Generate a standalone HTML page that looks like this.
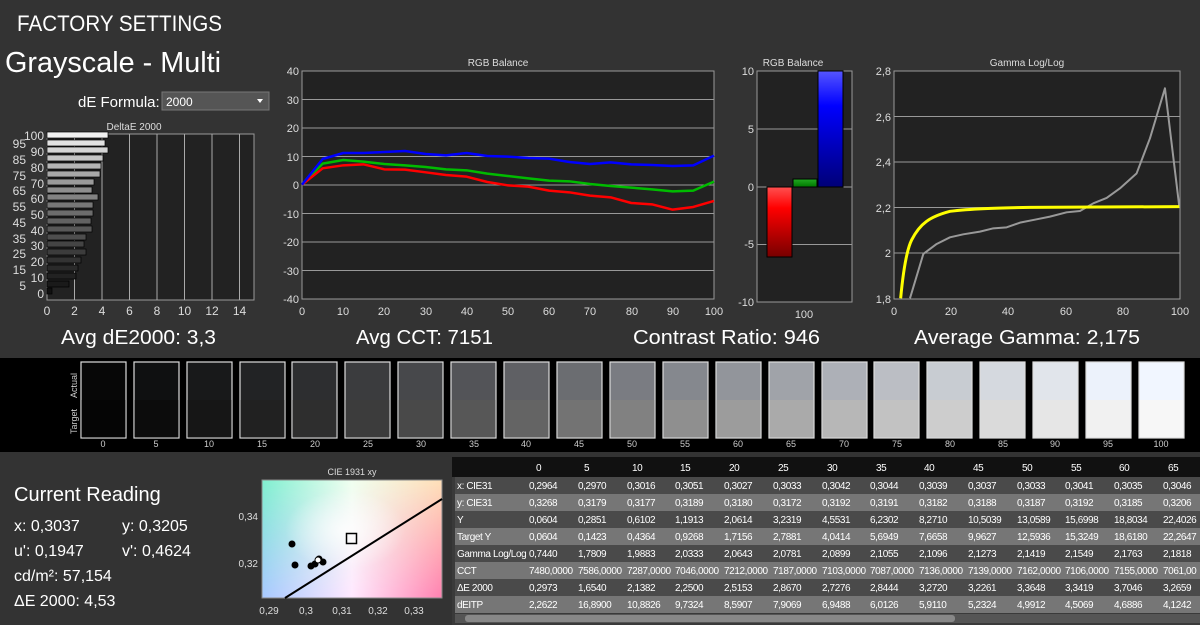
<!DOCTYPE html>
<html><head><meta charset="utf-8"><style>
html,body{margin:0;padding:0;background:#333;}
svg{display:block;font-family:"Liberation Sans",sans-serif;}
</style></head><body>
<svg width="1200" height="625" viewBox="0 0 1200 625" xmlns="http://www.w3.org/2000/svg">
<defs>
<linearGradient id="bar" x1="0" y1="0" x2="0" y2="1"><stop offset="0" stop-color="#fff" stop-opacity=".35"/><stop offset="1" stop-color="#000" stop-opacity=".35"/></linearGradient>
<linearGradient id="rb" x1="0" y1="0" x2="0" y2="1"><stop offset="0" stop-color="#ff5050"/><stop offset=".3" stop-color="#f00"/><stop offset="1" stop-color="#700"/></linearGradient>
<linearGradient id="gb" x1="0" y1="0" x2="0" y2="1"><stop offset="0" stop-color="#2a2"/><stop offset="1" stop-color="#070"/></linearGradient>
<linearGradient id="bb" x1="0" y1="0" x2="0" y2="1"><stop offset="0" stop-color="#55f"/><stop offset=".3" stop-color="#00f"/><stop offset="1" stop-color="#007"/></linearGradient>
<linearGradient id="cieH" x1="0" y1="0" x2="1" y2="0"><stop offset="0" stop-color="#80f0d0"/><stop offset=".5" stop-color="#f0fff0"/><stop offset="1" stop-color="#ffe0b8"/></linearGradient>
<linearGradient id="cieB" x1="0" y1="0" x2="1" y2="0"><stop offset="0" stop-color="#a8c8ff"/><stop offset=".5" stop-color="#ffe8ff"/><stop offset="1" stop-color="#ff80b0"/></linearGradient>
<linearGradient id="cieV" x1="0" y1="0" x2="0" y2="1"><stop offset="0" stop-color="#fff" stop-opacity="0"/><stop offset="1" stop-color="#fff" stop-opacity="1"/></linearGradient>
<mask id="mv"><rect x="262" y="480" width="180" height="118" fill="url(#cieV)"/></mask>
<radialGradient id="cw" cx=".5" cy=".5" r=".5"><stop offset="0" stop-color="#fff" stop-opacity=".8"/><stop offset="1" stop-color="#fff" stop-opacity="0"/></radialGradient>
</defs>
<rect width="1200" height="625" fill="#333"/>

<!-- Titles -->
<text x="17" y="31" font-size="22" fill="#fff" textLength="205" lengthAdjust="spacingAndGlyphs">FACTORY SETTINGS</text>
<text x="5" y="72" font-size="29" fill="#fff" textLength="216" lengthAdjust="spacingAndGlyphs">Grayscale - Multi</text>
<text x="78" y="107" font-size="15" fill="#fff">dE Formula:</text>
<rect x="162" y="92" width="107" height="18" fill="#555" stroke="#777"/>
<text x="166" y="106" font-size="12" fill="#fff">2000</text>
<polygon points="257,99 263,99 260,103" fill="#fff"/>

<!-- DeltaE chart -->
<text x="134" y="130" font-size="10" fill="#ddd" text-anchor="middle">DeltaE 2000</text>
<rect x="47" y="134" width="207" height="166" fill="#222" stroke="#999"/>
<g stroke="#aaa" stroke-width="1">
<line x1="74.5" y1="134" x2="74.5" y2="300"/><line x1="102" y1="134" x2="102" y2="300"/><line x1="129.5" y1="134" x2="129.5" y2="300"/><line x1="157" y1="134" x2="157" y2="300"/><line x1="184.5" y1="134" x2="184.5" y2="300"/><line x1="212" y1="134" x2="212" y2="300"/><line x1="239.5" y1="134" x2="239.5" y2="300"/>
</g>
<g stroke="#000" stroke-width=".7">
<rect x="47" y="288" width="5" height="6" fill="#111"/>
<rect x="47" y="281" width="22" height="6" fill="#1a1a1a"/>
<rect x="47" y="273" width="29" height="6" fill="#222"/>
<rect x="47" y="265" width="31" height="6" fill="#2a2a2a"/>
<rect x="47" y="257" width="34" height="6" fill="#333"/>
<rect x="47" y="249" width="39" height="6" fill="#3c3c3c"/>
<rect x="47" y="241" width="37" height="6" fill="#444"/>
<rect x="47" y="234" width="39" height="6" fill="#4e4e4e"/>
<rect x="47" y="226" width="45" height="6" fill="#585858"/>
<rect x="47" y="218" width="44" height="6" fill="#626262"/>
<rect x="47" y="210" width="46" height="6" fill="#6c6c6c"/>
<rect x="47" y="202" width="46" height="6" fill="#777"/>
<rect x="47" y="194" width="51" height="6" fill="#828282"/>
<rect x="47" y="187" width="45" height="6" fill="#8e8e8e"/>
<rect x="47" y="179" width="47" height="6" fill="#9a9a9a"/>
<rect x="47" y="171" width="53" height="6" fill="#a8a8a8"/>
<rect x="47" y="163" width="54" height="6" fill="#b6b6b6"/>
<rect x="47" y="155" width="56" height="6" fill="#c4c4c4"/>
<rect x="47" y="147" width="61" height="6" fill="#d4d4d4"/>
<rect x="47" y="140" width="58" height="6" fill="#e2e2e2"/>
<rect x="47" y="132" width="61" height="6" fill="#f0f0f0"/>
</g>
<g font-size="12" fill="#ddd">
<text x="44" y="140" text-anchor="end">100</text><text x="26" y="148" text-anchor="end">95</text>
<text x="44" y="156" text-anchor="end">90</text><text x="26" y="164" text-anchor="end">85</text>
<text x="44" y="172" text-anchor="end">80</text><text x="26" y="180" text-anchor="end">75</text>
<text x="44" y="188" text-anchor="end">70</text><text x="26" y="195" text-anchor="end">65</text>
<text x="44" y="203" text-anchor="end">60</text><text x="26" y="211" text-anchor="end">55</text>
<text x="44" y="219" text-anchor="end">50</text><text x="26" y="227" text-anchor="end">45</text>
<text x="44" y="235" text-anchor="end">40</text><text x="26" y="243" text-anchor="end">35</text>
<text x="44" y="250" text-anchor="end">30</text><text x="26" y="258" text-anchor="end">25</text>
<text x="44" y="266" text-anchor="end">20</text><text x="26" y="274" text-anchor="end">15</text>
<text x="44" y="282" text-anchor="end">10</text><text x="26" y="290" text-anchor="end">5</text>
<text x="44" y="298" text-anchor="end">0</text>
</g>
<g font-size="12" fill="#ddd" text-anchor="middle">
<text x="47" y="315">0</text><text x="74.5" y="315">2</text><text x="102" y="315">4</text><text x="129.5" y="315">6</text><text x="157" y="315">8</text><text x="184.5" y="315">10</text><text x="212" y="315">12</text><text x="239.5" y="315">14</text>
</g>

<!-- RGB Balance lines -->
<text x="498" y="66" font-size="10" fill="#ddd" text-anchor="middle">RGB Balance</text>
<rect x="302" y="71" width="412" height="228" fill="#222" stroke="#999"/>
<g stroke="#999" stroke-width="1">
<line x1="302" y1="99.5" x2="714" y2="99.5"/><line x1="302" y1="128" x2="714" y2="128"/><line x1="302" y1="156.5" x2="714" y2="156.5"/><line x1="302" y1="185" x2="714" y2="185"/><line x1="302" y1="213.5" x2="714" y2="213.5"/><line x1="302" y1="242" x2="714" y2="242"/><line x1="302" y1="270.5" x2="714" y2="270.5"/>
</g>
<g transform="translate(290,60) scale(0.3333)" fill="none" stroke-width="7.5" stroke-linejoin="round">
<polyline stroke="#0b0" stroke="#1a9a1a" points="36,374 98,311 160,300 220,305 283,312 345,316 407,321 468,328 530,331 592,341 653,348 715,355 777,362 838,364 900,372 962,378 1024,383 1086,388 1148,394 1210,392 1272,365"/>
<polyline stroke="#f00" points="36,374 98,325 160,316 220,313 283,328 345,329 407,337 468,345 530,350 592,366 653,376 715,380 777,392 838,397 900,407 962,412 1024,429 1086,433 1148,449 1210,441 1272,423"/>
<polyline stroke="#00f" points="36,374 98,297 160,279 220,279 283,276 345,273 407,282 468,286 530,279 592,288 653,290 715,294 777,296 838,306 900,312 962,307 1024,313 1086,315 1148,318 1210,316 1272,287"/>
</g>
<g font-size="11" fill="#ddd" text-anchor="end">
<text x="299" y="75">40</text><text x="299" y="104">30</text><text x="299" y="132">20</text><text x="299" y="161">10</text><text x="299" y="189">0</text><text x="299" y="218">-10</text><text x="299" y="246">-20</text><text x="299" y="275">-30</text><text x="299" y="303">-40</text>
</g>
<g font-size="11" fill="#ddd" text-anchor="middle">
<text x="302" y="315">0</text><text x="343" y="315">10</text><text x="384" y="315">20</text><text x="426" y="315">30</text><text x="467" y="315">40</text><text x="508" y="315">50</text><text x="549" y="315">60</text><text x="590" y="315">70</text><text x="632" y="315">80</text><text x="673" y="315">90</text><text x="714" y="315">100</text>
</g>

<!-- RGB bars -->
<text x="793" y="66" font-size="10" fill="#ddd" text-anchor="middle">RGB Balance</text>
<rect x="757" y="71" width="95" height="231" fill="#222" stroke="#999"/>
<g stroke="#999"><line x1="757" y1="129" x2="852" y2="129"/><line x1="757" y1="187" x2="852" y2="187"/><line x1="757" y1="244.5" x2="852" y2="244.5"/></g>
<rect x="767" y="187" width="25" height="70" fill="url(#rb)" stroke="#000"/>
<rect x="793" y="179" width="24" height="8" fill="url(#gb)" stroke="#000"/>
<rect x="818" y="71" width="25" height="116" fill="url(#bb)" stroke="#000"/>
<g font-size="11" fill="#ddd" text-anchor="end">
<text x="754" y="75">10</text><text x="754" y="133">5</text><text x="754" y="191">0</text><text x="754" y="248">-5</text><text x="754" y="306">-10</text>
</g>
<text x="804" y="318" font-size="11" fill="#ddd" text-anchor="middle">100</text>

<!-- Gamma -->
<text x="1027" y="66" font-size="10" fill="#ddd" text-anchor="middle">Gamma Log/Log</text>
<rect x="894" y="71" width="286" height="228" fill="#222" stroke="#999"/>
<g stroke="#999"><line x1="894" y1="116.5" x2="1180" y2="116.5"/><line x1="894" y1="162" x2="1180" y2="162"/><line x1="894" y1="207.5" x2="1180" y2="207.5"/><line x1="894" y1="253" x2="1180" y2="253"/></g>
<g transform="translate(730,50) scale(0.3333)" fill="none" stroke-width="6" stroke-linejoin="round">
<polyline stroke="#999" points="540,745 580,612 620,582 660,562 700,553 750,545 790,535 830,532 870,518 920,508 960,500 1010,487 1050,483 1090,460 1130,444 1170,415 1220,370 1260,265 1305,115 1348,470"/>
<path stroke="#ff0" stroke-width="9" d="M512,745 C520,660 530,600 545,570 C570,520 600,500 660,484 C720,476 800,474 900,472 L1348,470"/>
</g>
<g font-size="11" fill="#ddd" text-anchor="end">
<text x="891" y="75">2,8</text><text x="891" y="121">2,6</text><text x="891" y="166">2,4</text><text x="891" y="212">2,2</text><text x="891" y="257">2</text><text x="891" y="303">1,8</text>
</g>
<g font-size="11" fill="#ddd" text-anchor="middle">
<text x="894" y="315">0</text><text x="951" y="315">20</text><text x="1008" y="315">40</text><text x="1066" y="315">60</text><text x="1123" y="315">80</text><text x="1180" y="315">100</text>
</g>

<!-- averages -->
<g font-size="20" fill="#fff">
<text x="61" y="344" textLength="155" lengthAdjust="spacingAndGlyphs">Avg dE2000: 3,3</text>
<text x="356" y="344" textLength="137" lengthAdjust="spacingAndGlyphs">Avg CCT: 7151</text>
<text x="633" y="344" textLength="187" lengthAdjust="spacingAndGlyphs">Contrast Ratio: 946</text>
<text x="914" y="344" textLength="226" lengthAdjust="spacingAndGlyphs">Average Gamma: 2,175</text>
</g>

<!-- swatches -->
<rect x="0" y="358" width="1200" height="94" fill="#000"/>
<text transform="translate(77,398) rotate(-90)" font-size="9" fill="#ccc">Actual</text>
<text transform="translate(77,434) rotate(-90)" font-size="9" fill="#ccc">Target</text>
<g stroke="#ddd" stroke-width="1.2">
<rect x="81" y="362" width="45" height="76" fill="#070707"/>
<rect x="134" y="362" width="45" height="76" fill="#0f1011"/>
<rect x="187" y="362" width="45" height="76" fill="#18191a"/>
<rect x="240" y="362" width="45" height="76" fill="#222325"/>
<rect x="292" y="362" width="45" height="76" fill="#2d2e30"/>
<rect x="345" y="362" width="45" height="76" fill="#3b3c3e"/>
<rect x="398" y="362" width="45" height="76" fill="#47484b"/>
<rect x="451" y="362" width="45" height="76" fill="#535458"/>
<rect x="504" y="362" width="45" height="76" fill="#5f6064"/>
<rect x="557" y="362" width="45" height="76" fill="#6b6d71"/>
<rect x="610" y="362" width="45" height="76" fill="#7a7c82"/>
<rect x="663" y="362" width="45" height="76" fill="#85888e"/>
<rect x="716" y="362" width="45" height="76" fill="#92959b"/>
<rect x="769" y="362" width="45" height="76" fill="#a0a3a9"/>
<rect x="822" y="362" width="45" height="76" fill="#adb0b7"/>
<rect x="874" y="362" width="45" height="76" fill="#bbbec4"/>
<rect x="927" y="362" width="45" height="76" fill="#c8ccd2"/>
<rect x="980" y="362" width="45" height="76" fill="#d5d9df"/>
<rect x="1033" y="362" width="45" height="76" fill="#e1e5eb"/>
<rect x="1086" y="362" width="45" height="76" fill="#ecf2fb"/>
<rect x="1139" y="362" width="45" height="76" fill="#f1f6ff"/>
</g>
<g>
<rect x="81.6" y="400" width="43.8" height="37.4" fill="#050505"/>
<rect x="134.6" y="400" width="43.8" height="37.4" fill="#0c0c0c"/>
<rect x="187.6" y="400" width="43.8" height="37.4" fill="#161616"/>
<rect x="240.6" y="400" width="43.8" height="37.4" fill="#212121"/>
<rect x="292.6" y="400" width="43.8" height="37.4" fill="#2e2e2e"/>
<rect x="345.6" y="400" width="43.8" height="37.4" fill="#3c3c3c"/>
<rect x="398.6" y="400" width="43.8" height="37.4" fill="#494949"/>
<rect x="451.6" y="400" width="43.8" height="37.4" fill="#575757"/>
<rect x="504.6" y="400" width="43.8" height="37.4" fill="#646464"/>
<rect x="557.6" y="400" width="43.8" height="37.4" fill="#737373"/>
<rect x="610.6" y="400" width="43.8" height="37.4" fill="#818181"/>
<rect x="663.6" y="400" width="43.8" height="37.4" fill="#8f8f8f"/>
<rect x="716.6" y="400" width="43.8" height="37.4" fill="#9c9c9c"/>
<rect x="769.6" y="400" width="43.8" height="37.4" fill="#aaaaaa"/>
<rect x="822.6" y="400" width="43.8" height="37.4" fill="#b7b7b7"/>
<rect x="874.6" y="400" width="43.8" height="37.4" fill="#c2c2c2"/>
<rect x="927.6" y="400" width="43.8" height="37.4" fill="#cdcdcd"/>
<rect x="980.6" y="400" width="43.8" height="37.4" fill="#dadada"/>
<rect x="1033.6" y="400" width="43.8" height="37.4" fill="#e6e6e6"/>
<rect x="1086.6" y="400" width="43.8" height="37.4" fill="#f1f1f1"/>
<rect x="1139.6" y="400" width="43.8" height="37.4" fill="#f7f7f7"/>
</g>
<g font-size="9" fill="#ccc" text-anchor="middle">
<text x="103" y="447">0</text><text x="156" y="447">5</text><text x="209" y="447">10</text><text x="262" y="447">15</text><text x="315" y="447">20</text><text x="368" y="447">25</text><text x="421" y="447">30</text><text x="474" y="447">35</text><text x="526" y="447">40</text><text x="579" y="447">45</text><text x="632" y="447">50</text><text x="685" y="447">55</text><text x="738" y="447">60</text><text x="791" y="447">65</text><text x="844" y="447">70</text><text x="897" y="447">75</text><text x="950" y="447">80</text><text x="1003" y="447">85</text><text x="1055" y="447">90</text><text x="1108" y="447">95</text><text x="1161" y="447">100</text>
</g>

<!-- current reading -->
<g fill="#fff">
<text x="14" y="501" font-size="20">Current Reading</text>
<text x="14" y="531" font-size="16">x: 0,3037</text><text x="122" y="531" font-size="16">y: 0,3205</text>
<text x="14" y="556" font-size="16">u': 0,1947</text><text x="122" y="556" font-size="16">v': 0,4624</text>
<text x="14" y="581" font-size="16">cd/m²: 57,154</text>
<text x="14" y="606" font-size="16">ΔE 2000: 4,53</text>
</g>

<!-- CIE -->
<text x="352" y="475" font-size="9" fill="#ddd" text-anchor="middle">CIE 1931 xy</text>
<rect x="262" y="480" width="180" height="118" fill="url(#cieH)"/>
<rect x="262" y="480" width="180" height="118" fill="url(#cieB)" mask="url(#mv)"/>
<ellipse cx="345" cy="530" rx="60" ry="40" fill="url(#cw)"/>
<rect x="262" y="480" width="180" height="118" fill="none" stroke="#888"/>
<line x1="285" y1="598" x2="442" y2="499" stroke="#000" stroke-width="2"/>
<rect x="346.5" y="533.5" width="10" height="10" fill="none" stroke="#000" stroke-width="1.5"/>
<g fill="#000"><circle cx="292" cy="544" r="3.5"/><circle cx="295" cy="565" r="3.5"/><circle cx="311" cy="566" r="3.5"/><circle cx="315" cy="564" r="3.5"/><circle cx="323" cy="562" r="3.5"/><circle cx="319" cy="559" r="3.5"/></g>
<circle cx="318" cy="560" r="3" fill="#fff" stroke="#000"/>
<g font-size="10" fill="#ddd">
<text x="258" y="520" text-anchor="end">0,34</text><text x="258" y="567" text-anchor="end">0,32</text>
<text x="269" y="614" text-anchor="middle">0,29</text><text x="306" y="614" text-anchor="middle">0,3</text><text x="342" y="614" text-anchor="middle">0,31</text><text x="378" y="614" text-anchor="middle">0,32</text><text x="414" y="614" text-anchor="middle">0,33</text>
</g>

<!-- table -->
<rect x="452" y="457" width="748" height="168" fill="#3a3a3a"/>
<rect x="452" y="457" width="748" height="20" fill="#111"/>
<rect x="455" y="477" width="745" height="17" fill="#4a4a4a"/>
<rect x="455" y="494" width="745" height="17" fill="#767676"/>
<rect x="455" y="511" width="745" height="17" fill="#4a4a4a"/>
<rect x="455" y="528" width="745" height="17" fill="#767676"/>
<rect x="455" y="545" width="745" height="17" fill="#4a4a4a"/>
<rect x="455" y="562" width="745" height="17" fill="#767676"/>
<rect x="455" y="579" width="745" height="17" fill="#4a4a4a"/>
<rect x="455" y="596" width="745" height="17" fill="#767676"/>
<rect x="455" y="614" width="745" height="9" fill="#555"/>
<rect x="465" y="615" width="490" height="7" rx="3" fill="#888"/>
<g font-size="10" fill="#fff" letter-spacing="-0.4">
<text y="471"><tspan x="536">0</tspan><tspan x="584">5</tspan><tspan x="632">10</tspan><tspan x="680">15</tspan><tspan x="729">20</tspan><tspan x="778">25</tspan><tspan x="827">30</tspan><tspan x="876">35</tspan><tspan x="924">40</tspan><tspan x="973">45</tspan><tspan x="1022">50</tspan><tspan x="1071">55</tspan><tspan x="1119">60</tspan><tspan x="1168">65</tspan></text>
<text y="489"><tspan x="457">x: CIE31</tspan><tspan x="529">0,2964</tspan><tspan x="578">0,2970</tspan><tspan x="627">0,3016</tspan><tspan x="675">0,3051</tspan><tspan x="724">0,3027</tspan><tspan x="773">0,3033</tspan><tspan x="822">0,3042</tspan><tspan x="870">0,3044</tspan><tspan x="919">0,3039</tspan><tspan x="968">0,3037</tspan><tspan x="1017">0,3033</tspan><tspan x="1065">0,3041</tspan><tspan x="1114">0,3035</tspan><tspan x="1163">0,3046</tspan></text>
<text y="506"><tspan x="457">y: CIE31</tspan><tspan x="529">0,3268</tspan><tspan x="578">0,3179</tspan><tspan x="627">0,3177</tspan><tspan x="675">0,3189</tspan><tspan x="724">0,3180</tspan><tspan x="773">0,3172</tspan><tspan x="822">0,3192</tspan><tspan x="870">0,3191</tspan><tspan x="919">0,3182</tspan><tspan x="968">0,3188</tspan><tspan x="1017">0,3187</tspan><tspan x="1065">0,3192</tspan><tspan x="1114">0,3185</tspan><tspan x="1163">0,3206</tspan></text>
<text y="523"><tspan x="457">Y</tspan><tspan x="529">0,0604</tspan><tspan x="578">0,2851</tspan><tspan x="627">0,6102</tspan><tspan x="675">1,1913</tspan><tspan x="724">2,0614</tspan><tspan x="773">3,2319</tspan><tspan x="822">4,5531</tspan><tspan x="870">6,2302</tspan><tspan x="919">8,2710</tspan><tspan x="968">10,5039</tspan><tspan x="1017">13,0589</tspan><tspan x="1065">15,6998</tspan><tspan x="1114">18,8034</tspan><tspan x="1163">22,4026</tspan></text>
<text y="540"><tspan x="457">Target Y</tspan><tspan x="529">0,0604</tspan><tspan x="578">0,1423</tspan><tspan x="627">0,4364</tspan><tspan x="675">0,9268</tspan><tspan x="724">1,7156</tspan><tspan x="773">2,7881</tspan><tspan x="822">4,0414</tspan><tspan x="870">5,6949</tspan><tspan x="919">7,6658</tspan><tspan x="968">9,9627</tspan><tspan x="1017">12,5936</tspan><tspan x="1065">15,3249</tspan><tspan x="1114">18,6180</tspan><tspan x="1163">22,2647</tspan></text>
<text y="557"><tspan x="457">Gamma Log/Log</tspan><tspan x="529">0,7440</tspan><tspan x="578">1,7809</tspan><tspan x="627">1,9883</tspan><tspan x="675">2,0333</tspan><tspan x="724">2,0643</tspan><tspan x="773">2,0781</tspan><tspan x="822">2,0899</tspan><tspan x="870">2,1055</tspan><tspan x="919">2,1096</tspan><tspan x="968">2,1273</tspan><tspan x="1017">2,1419</tspan><tspan x="1065">2,1549</tspan><tspan x="1114">2,1763</tspan><tspan x="1163">2,1818</tspan></text>
<text y="574"><tspan x="457">CCT</tspan><tspan x="529">7480,0000</tspan><tspan x="578">7586,0000</tspan><tspan x="627">7287,0000</tspan><tspan x="675">7046,0000</tspan><tspan x="724">7212,0000</tspan><tspan x="773">7187,0000</tspan><tspan x="822">7103,0000</tspan><tspan x="870">7087,0000</tspan><tspan x="919">7136,0000</tspan><tspan x="968">7139,0000</tspan><tspan x="1017">7162,0000</tspan><tspan x="1065">7106,0000</tspan><tspan x="1114">7155,0000</tspan><tspan x="1163">7061,00</tspan></text>
<text y="591"><tspan x="457">ΔE 2000</tspan><tspan x="529">0,2973</tspan><tspan x="578">1,6540</tspan><tspan x="627">2,1382</tspan><tspan x="675">2,2500</tspan><tspan x="724">2,5153</tspan><tspan x="773">2,8670</tspan><tspan x="822">2,7276</tspan><tspan x="870">2,8444</tspan><tspan x="919">3,2720</tspan><tspan x="968">3,2261</tspan><tspan x="1017">3,3648</tspan><tspan x="1065">3,3419</tspan><tspan x="1114">3,7046</tspan><tspan x="1163">3,2659</tspan></text>
<text y="608"><tspan x="457">dEITP</tspan><tspan x="529">2,2622</tspan><tspan x="578">16,8900</tspan><tspan x="627">10,8826</tspan><tspan x="675">9,7324</tspan><tspan x="724">8,5907</tspan><tspan x="773">7,9069</tspan><tspan x="822">6,9488</tspan><tspan x="870">6,0126</tspan><tspan x="919">5,9110</tspan><tspan x="968">5,2324</tspan><tspan x="1017">4,9912</tspan><tspan x="1065">4,5069</tspan><tspan x="1114">4,6886</tspan><tspan x="1163">4,1242</tspan></text>
</g>
</svg>
</body></html>
